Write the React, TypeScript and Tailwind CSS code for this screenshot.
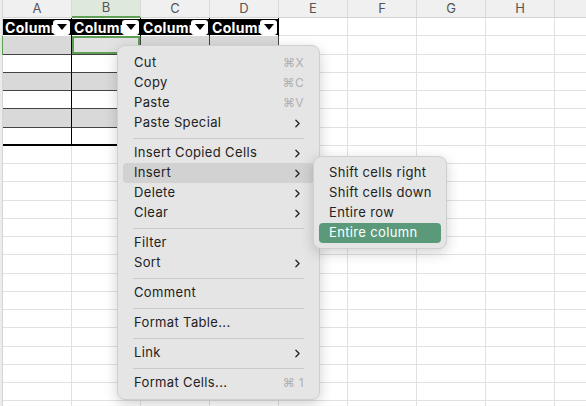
import { ChevronRight } from 'lucide-react';

const COLS = ['A', 'B', 'C', 'D', 'E', 'F', 'G', 'H', ''];
const ROWS = 22;

type Item = { label: string; shortcut?: string; sub?: boolean; active?: boolean } | 'sep';

const MENU: Item[] = [
    { label: 'Cut', shortcut: '⌘X' },
    { label: 'Copy', shortcut: '⌘C' },
    { label: 'Paste', shortcut: '⌘V' },
    { label: 'Paste Special', sub: true },
    'sep',
    { label: 'Insert Copied Cells', sub: true },
    { label: 'Insert', sub: true, active: true },
    { label: 'Delete', sub: true },
    { label: 'Clear', sub: true },
    'sep',
    { label: 'Filter' },
    { label: 'Sort', sub: true },
    'sep',
    { label: 'Comment' },
    'sep',
    { label: 'Format Table...' },
    'sep',
    { label: 'Link', sub: true },
    'sep',
    { label: 'Format Cells...', shortcut: '⌘ 1' },
];

const SUBMENU = ['Shift cells right', 'Shift cells down', 'Entire row', 'Entire column'];

function HeaderCell() {
    return (
        <div className="flex h-full w-full items-center overflow-hidden bg-black pl-[2px] pr-[1px]">
            <span className="min-w-0 flex-1 overflow-hidden whitespace-nowrap text-[14px] font-bold tracking-[0.3px] text-white">
                Column
            </span>
            <span className="flex h-[15px] w-[17px] shrink-0 items-center justify-center rounded-[3px] bg-white">
                <svg width="10" height="6" viewBox="0 0 10 6">
                    <path d="M0 0h10L5 6z" fill="#000" />
                </svg>
            </span>
        </div>
    );
}

function Sheet() {
    return (
        <div className="flex flex-col">
            <div className="flex h-[18px]">
                <div className="w-[3px] shrink-0 border-r border-[#d4d4d4] bg-[#ececec]" />
                {COLS.map((c, i) => (
                    <div
                        key={i}
                        className={
                            'flex w-[69px] shrink-0 items-center justify-center border-r border-[#dadada] text-[13px] text-[#555] ' +
                            (c === 'B' ? 'border-b-2 border-b-[#5e9e55] bg-[#dfe8dc]' : 'border-b border-b-[#d4d4d4] bg-[#f0f0f0]')
                        }
                    >
                        {c}
                    </div>
                ))}
            </div>
            {Array.from({ length: ROWS }).map((_, r) => {
                const inTable = r < 7;
                const gray = inTable && r % 2 === 1;
                return (
                    <div key={r} className="flex h-[18.25px]">
                        <div
                            className={
                                'w-[3px] shrink-0 border-r ' +
                                (r === 1 ? 'border-[#5e9e55] bg-[#dfe8dc]' : 'border-[#d4d4d4] bg-[#ececec]')
                            }
                        />
                        {COLS.map((_, c) => {
                            const tableCol = inTable && c < 4;
                            if (tableCol && r === 0) {
                                return (
                                    <div key={c} className="w-[69px] shrink-0 border-r border-black py-[1px]">
                                        <HeaderCell />
                                    </div>
                                );
                            }
                            if (tableCol) {
                                const selected = r === 1 && c === 1;
                                return (
                                    <div
                                        key={c}
                                        className={
                                            'w-[69px] shrink-0 border-r border-b ' +
                                            (r === 6 ? 'border-b-2 border-b-black ' : 'border-b-[#444] ') +
                                            (c === 0 ? 'border-r-black ' : 'border-r-[#444] ') +
                                            (gray ? 'bg-[#d9d9d9]' : 'bg-white')
                                        }
                                    >
                                        {selected && <div className="h-full w-full border-2 border-[#5e9e55] bg-[#e2e2e2]" />}
                                    </div>
                                );
                            }
                            return (
                                <div
                                    key={c}
                                    className="w-[69px] shrink-0 border-r border-b border-[#e1e1e1] bg-white"
                                />
                            );
                        })}
                    </div>
                );
            })}
        </div>
    );
}

function ContextMenu() {
    return (
        <div className="absolute left-[117px] top-[45px] w-[203px] rounded-[8px] border border-[#cfcfcf] bg-[#e5e5e5] px-[5px] pb-[6px] pt-[7px] shadow-[0_4px_14px_rgba(0,0,0,0.18)]">
            {MENU.map((item, i) =>
                item === 'sep' ? (
                    <div key={i} className="mx-[10px] my-[4.5px] h-px bg-[#cacaca]" />
                ) : (
                    <div
                        key={i}
                        className={
                            'flex h-[20px] items-center justify-between rounded-[4px] pl-[11px] pr-[10px] text-[13px] tracking-[0.35px] text-[#222] ' +
                            (item.active ? 'bg-[#d2d2d2]' : '')
                        }
                    >
                        <span>{item.label}</span>
                        {item.shortcut && <span className="text-[12px] text-[#b0b0b0]">{item.shortcut}</span>}
                        {item.sub && <ChevronRight className="h-[13px] w-[13px] text-[#222]" strokeWidth={2.4} />}
                    </div>
                )
            )}
        </div>
    );
}

function SubMenu() {
    return (
        <div className="absolute left-[313px] top-[156px] w-[134px] rounded-[8px] border border-[#cfcfcf] bg-[#e5e5e5] px-[5px] pb-[5px] pt-[6px] shadow-[0_4px_14px_rgba(0,0,0,0.18)]">
            {SUBMENU.map((s, i) => {
                const active = i === SUBMENU.length - 1;
                return (
                    <div
                        key={s}
                        className={
                            'flex h-[20px] items-center rounded-[4px] pl-[10px] text-[13px] tracking-[0.35px] ' +
                            (active ? 'bg-[#5a9a7b] text-white' : 'text-[#222]')
                        }
                    >
                        {s}
                    </div>
                );
            })}
        </div>
    );
}

export default function App() {
    return (
        <div
            className="relative h-[406px] w-[586px] overflow-hidden bg-white"
            style={{ fontFamily: 'Inter, "Noto Sans", sans-serif' }}
        >
            <Sheet />
            <ContextMenu />
            <SubMenu />
        </div>
    );
}
